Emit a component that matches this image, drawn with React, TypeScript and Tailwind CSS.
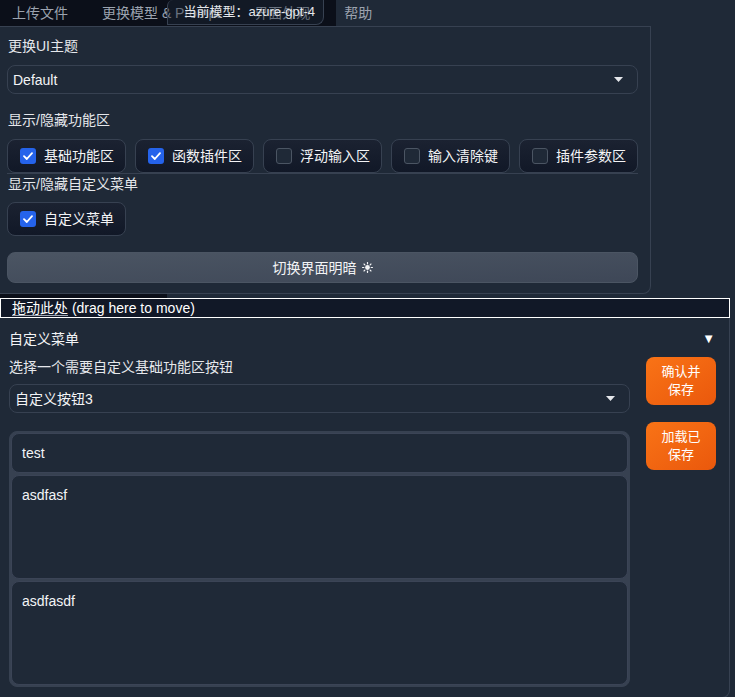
const font = {
  fontFamily: '"Liberation Sans", "Noto Sans CJK SC", sans-serif',
}

const Caret = () => (
  <svg width="9" height="5" viewBox="0 0 9 5" className="shrink-0">
    <path d="M0 0 L9 0 L4.5 5 Z" fill="#e5e7eb" />
  </svg>
)

const Sun = () => (
  <svg width="11" height="11" viewBox="0 0 12 12" className="shrink-0">
    <circle cx="6" cy="6" r="2.6" fill="#f3f4f6" />
    <g stroke="#f3f4f6" strokeWidth="1.3" strokeLinecap="round">
      <path d="M6 0.6 V2" />
      <path d="M6 10 V11.4" />
      <path d="M0.6 6 H2" />
      <path d="M10 6 H11.4" />
      <path d="M2.2 2.2 L3.1 3.1" />
      <path d="M8.9 8.9 L9.8 9.8" />
      <path d="M2.2 9.8 L3.1 8.9" />
      <path d="M8.9 3.1 L9.8 2.2" />
    </g>
  </svg>
)

const Check = ({ checked }: { checked: boolean }) =>
  checked ? (
    <span className="flex size-4 items-center justify-center rounded-[3px] bg-[#2563eb]">
      <svg width="10" height="8" viewBox="0 0 10 8">
        <path
          d="M1 4.2 L3.8 7 L9 1.2"
          fill="none"
          stroke="white"
          strokeWidth="1.8"
          strokeLinecap="round"
          strokeLinejoin="round"
        />
      </svg>
    </span>
  ) : (
    <span className="size-4 rounded-[3px] border border-[#4b5563] bg-[#1f2937]" />
  )

const CheckItem = ({ label, checked }: { label: string; checked: boolean }) => (
  <div className="flex h-[34px] w-[119px] items-center gap-[8px] rounded-lg border border-[#374151] bg-gradient-to-b from-[#1b2231] to-[#111827] pl-[12px] text-sm text-[#f3f4f6]">
    <Check checked={checked} />
    <span>{label}</span>
  </div>
)

const Select = ({ value, w }: { value: string; w: string }) => (
  <div
    className={`flex h-[29px] ${w} items-center justify-between rounded-lg border border-[#374151] bg-[#1f2937] pl-[5px] pr-[14px] text-sm text-[#f3f4f6]`}
  >
    <span>{value}</span>
    <Caret />
  </div>
)

export default function App() {
  const tabs = ['上传文件', '更换模型 & Prompt', '界面外观', '帮助']
  return (
    <div style={font} className="relative h-[697px] w-[735px] overflow-hidden bg-[#1f2937]">
      {/* tab bar */}
      <div className="relative flex h-[26px] items-center">
        <div className="flex h-full w-[336px] items-center gap-[34px] bg-[#0b0f19] pl-3 text-sm text-[#9ca3af]">
          {tabs.map((t) => (
            <span key={t} className="whitespace-nowrap">
              {t}
            </span>
          ))}
        </div>
        <div className="absolute left-[167px] top-0 flex h-[25px] w-[157px] items-center justify-end rounded-br-lg rounded-tl-md border border-t-0 border-[#374151] bg-[#1f2937]/40 pr-[8px] text-[13px] text-[#e5e7eb]">
          当前模型：azure-gpt-4
        </div>
      </div>

      {/* appearance panel */}
      <div className="flex w-[651px] flex-col rounded-br-lg border border-l-0 border-[#374151] pb-[10px] pl-[7px] pr-[12px] pt-[9px] text-sm text-[#e5e7eb]">
        <div className="pl-[1px] leading-5">更换UI主题</div>
        <div className="mt-[9px]">
          <Select value="Default" w="w-full" />
        </div>
        <div className="mt-[16px] border-b border-[#374151]">
          <div className="pl-[1px] leading-5">显示/隐藏功能区</div>
          <div className="mt-[9px] flex gap-[9px]">
            <CheckItem label="基础功能区" checked />
            <CheckItem label="函数插件区" checked />
            <CheckItem label="浮动输入区" checked={false} />
            <CheckItem label="输入清除键" checked={false} />
            <CheckItem label="插件参数区" checked={false} />
          </div>
        </div>
        <div className="pl-[1px] leading-5">显示/隐藏自定义菜单</div>
        <div className="mt-[8px]">
          <CheckItem label="自定义菜单" checked />
        </div>
        <button
          type="button"
          className="mt-[16px] flex h-[31px] w-full items-center justify-center gap-[5px] rounded-lg border border-[#4b5563] bg-gradient-to-br from-[#4b5563] to-[#3e4757] text-sm text-[#f3f4f6]"
        >
          切换界面明暗
          <Sun />
        </button>
      </div>

      <div className="h-[4px] w-[167px] bg-[#0b0f19]" />

      {/* drag handle */}
      <div className="flex h-[20px] w-[730px] items-center border border-white bg-[#111827] pl-[11px] text-sm text-white">
        <span className="underline decoration-[#9ca3af] decoration-1 underline-offset-2">拖动此处</span>
        <span>&nbsp;(drag here to move)</span>
      </div>

      {/* custom menu panel */}
      <div className="flex h-[380px] w-[730px] flex-col rounded-br-lg border border-l-0 border-t-0 border-[#374151] pl-[9px] pr-[13px] pt-[11px] text-sm text-[#e5e7eb]">
        <div className="flex items-center justify-between leading-5 text-[#f3f4f6]">
          <span>自定义菜单</span>
          <span className="pr-[1px] text-[13px] text-white">▼</span>
        </div>
        <div className="mt-[8px] flex gap-[16px]">
          <div className="flex w-[622px] flex-col">
            <div className="leading-5">选择一个需要自定义基础功能区按钮</div>
            <div className="mt-[7px]">
              <Select value="自定义按钮3" w="w-[621px]" />
            </div>
            <div className="mt-[18px] flex flex-col gap-[2px] rounded-lg border border-[#374151] bg-[#374151] p-[1px] text-[#f3f4f6]">
              <div className="h-[40px] rounded-lg border border-[#3b4456] bg-[#1f2937] px-[10px] pt-[9px] leading-5">
                test
              </div>
              <div className="h-[104px] rounded-lg border border-[#3b4456] bg-[#1f2937] px-[10px] pt-[9px] leading-5">
                asdfasf
              </div>
              <div className="h-[104px] rounded-lg border border-[#3b4456] bg-[#1f2937] px-[10px] pt-[9px] leading-5">
                asdfasdf
              </div>
            </div>
          </div>
          <div className="flex flex-col gap-[17px]">
            <button
              type="button"
              className="flex h-[48px] w-[70px] items-center justify-center rounded-lg bg-gradient-to-br from-[#f97316] to-[#ea580c] text-[13px] leading-[18px] text-white"
            >
              确认并
              <br />
              保存
            </button>
            <button
              type="button"
              className="flex h-[48px] w-[70px] items-center justify-center rounded-lg bg-gradient-to-br from-[#f97316] to-[#ea580c] text-[13px] leading-[18px] text-white"
            >
              加载已
              <br />
              保存
            </button>
          </div>
        </div>
      </div>
    </div>
  )
}
